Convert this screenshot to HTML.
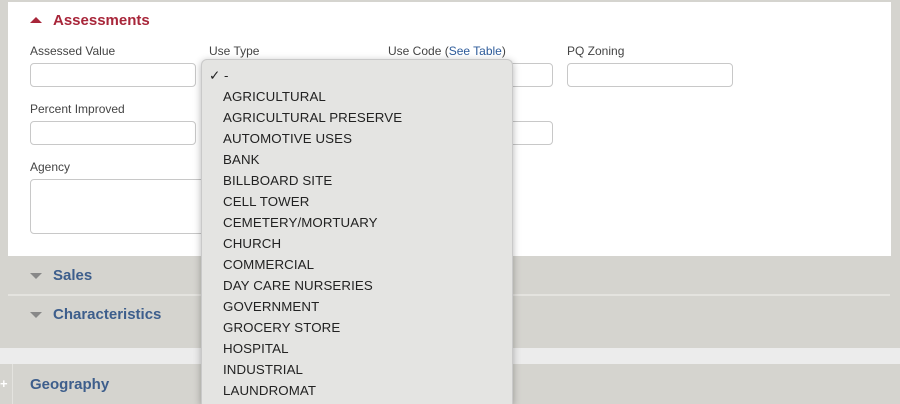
<!DOCTYPE html>
<html style="width:900px;height:404px;overflow:hidden"><head><style>
body{margin:0;width:900px;height:404px;overflow:hidden;background:#d5d4cf;font-family:"Liberation Sans",Arial,sans-serif;position:relative}
.a{position:absolute}
.panel{left:8px;top:2px;width:883px;height:254px;background:#fff}
.lbl{font-size:12px;color:#444}
.inp{background:#fff;border:1px solid #c8c8c8;border-radius:4px;box-sizing:border-box}
.hd{font-weight:bold;font-size:15px;color:#3d5e8c}
.tri{width:0;height:0;border-left:6px solid transparent;border-right:6px solid transparent}
.dd{left:201px;top:59px;width:312px;height:345px;background:#e4e4e2;border-radius:6px 6px 0 0;box-shadow:0 2px 8px rgba(0,0,0,.3);border:1px solid #c9c9c9;border-bottom:none;box-sizing:border-box;overflow:hidden}
.it{position:absolute;left:21px;font-size:13.3px;color:#222;letter-spacing:.1px}
</style></head><body>
<div class="a panel"></div>
<div class="a tri" style="left:30px;top:17px;border-bottom:6px solid #a8263a"></div>
<div class="a" style="left:53px;top:12px;font-weight:bold;font-size:15px;color:#a8263a">Assessments</div>
<div class="a lbl" style="left:30px;top:44px">Assessed Value</div>
<div class="a lbl" style="left:209px;top:44px">Use Type</div>
<div class="a lbl" style="left:388px;top:44px">Use Code (<span style="color:#2d5b9a">See Table</span>)</div>
<div class="a lbl" style="left:567px;top:44px">PQ Zoning</div>
<div class="a inp" style="left:30px;top:63px;width:166px;height:24px"></div>
<div class="a inp" style="left:480px;top:63px;width:73px;height:24px"></div>
<div class="a inp" style="left:567px;top:63px;width:166px;height:24px"></div>
<div class="a lbl" style="left:30px;top:102px">Percent Improved</div>
<div class="a inp" style="left:30px;top:121px;width:166px;height:24px"></div>
<div class="a inp" style="left:480px;top:121px;width:73px;height:24px"></div>
<div class="a lbl" style="left:30px;top:160px">Agency</div>
<div class="a inp" style="left:30px;top:179px;width:190px;height:55px"></div>
<div class="a tri" style="left:30px;top:273px;border-top:6px solid #888"></div>
<div class="a hd" style="left:53px;top:267px">Sales</div>
<div class="a" style="left:8px;top:294px;width:882px;height:2px;background:#e4e3df"></div>
<div class="a tri" style="left:30px;top:312px;border-top:6px solid #888"></div>
<div class="a hd" style="left:53px;top:306px">Characteristics</div>
<div class="a" style="left:0;top:348px;width:900px;height:16px;background:#ececec"></div>
<div class="a" style="left:12px;top:364px;width:1px;height:40px;background:#e4e3df"></div>
<div class="a" style="left:0;top:376px;color:#fff;font-size:13px;font-weight:bold">+</div>
<div class="a hd" style="left:30px;top:376px">Geography</div>
<div class="a dd">
<div class="it" style="left:7px;top:8px">✓ -</div>
<div class="it" style="top:29px">AGRICULTURAL</div>
<div class="it" style="top:50px">AGRICULTURAL PRESERVE</div>
<div class="it" style="top:71px">AUTOMOTIVE USES</div>
<div class="it" style="top:92px">BANK</div>
<div class="it" style="top:113px">BILLBOARD SITE</div>
<div class="it" style="top:134px">CELL TOWER</div>
<div class="it" style="top:155px">CEMETERY/MORTUARY</div>
<div class="it" style="top:176px">CHURCH</div>
<div class="it" style="top:197px">COMMERCIAL</div>
<div class="it" style="top:218px">DAY CARE NURSERIES</div>
<div class="it" style="top:239px">GOVERNMENT</div>
<div class="it" style="top:260px">GROCERY STORE</div>
<div class="it" style="top:281px">HOSPITAL</div>
<div class="it" style="top:302px">INDUSTRIAL</div>
<div class="it" style="top:323px">LAUNDROMAT</div>
</div>
</body></html>
